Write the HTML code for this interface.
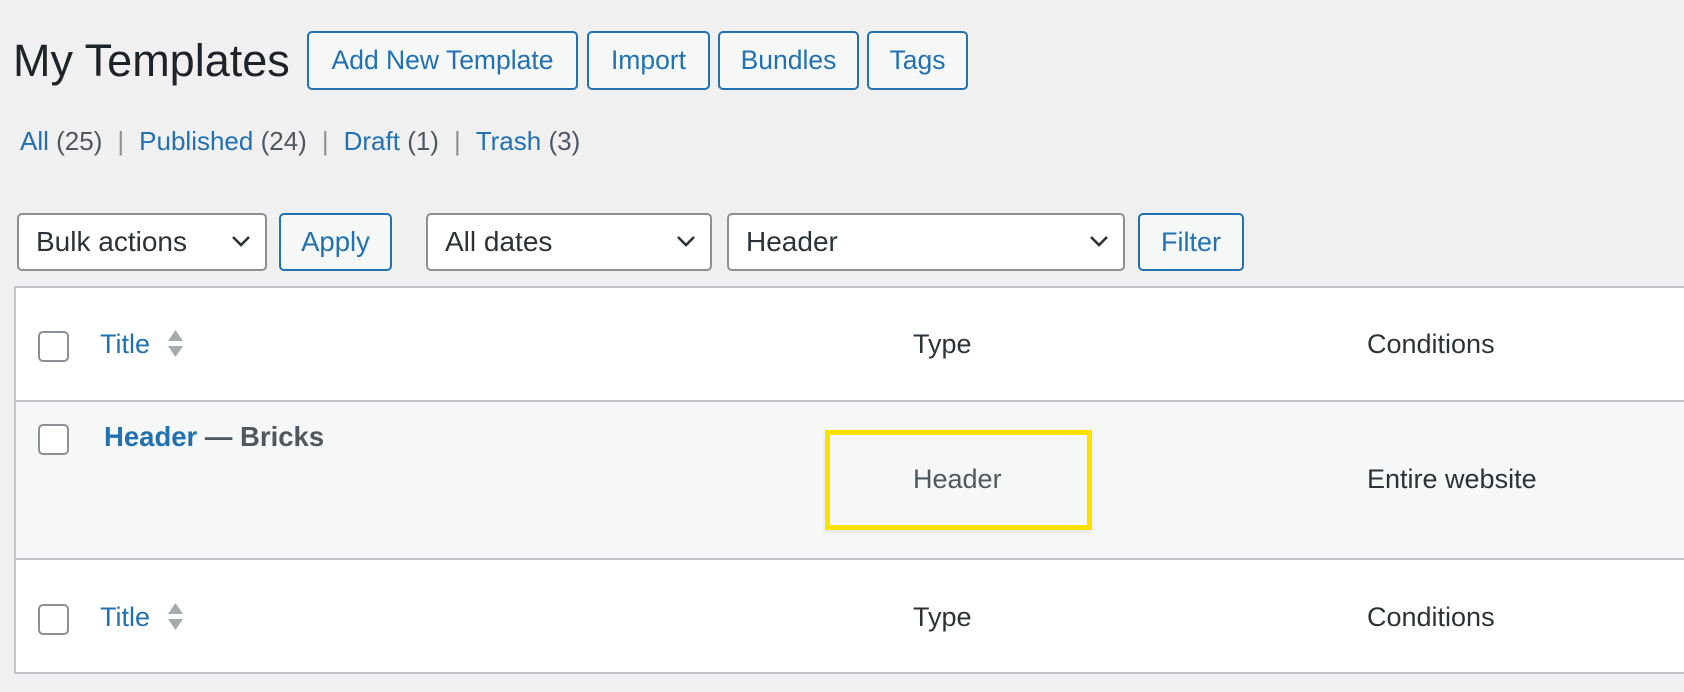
<!DOCTYPE html>
<html><head><meta charset="utf-8"><style>
*{box-sizing:border-box;margin:0;padding:0}
body{width:1684px;height:692px;background:#f0f0f1;font-family:"Liberation Sans",sans-serif;position:relative;overflow:hidden;color:#1d2327}
.a{position:absolute;white-space:nowrap}
.c{position:absolute;white-space:nowrap;height:40px;line-height:40px}
.btn{position:absolute;border:2px solid #2271b1;border-radius:5px;background:#f6f7f7;color:#2271b1;font-size:26.5px;display:flex;align-items:center;justify-content:center}
.sel{position:absolute;border:2px solid #8c8f94;border-radius:5px;background:#fff;color:#2c3338;font-size:28px;display:flex;align-items:center;padding-left:17px}
.sel svg{position:absolute;right:14px;top:50%;margin-top:-7px}
.blue{color:#2271b1}
.gray{color:#50575e}
.cb{position:absolute;width:31px;height:31px;border:2px solid #8c8f94;border-radius:5px;background:#fff}
.txt{font-size:27px;color:#2c3338}
.sep{color:#8c8f94;margin:0 15px}
</style></head><body>
<div class="c" style="left:13px;top:38px;height:46px;line-height:46px;font-size:45px;color:#1d2327">My Templates</div>
<div class="btn" style="left:307px;top:31px;width:271px;height:59px">Add New Template</div>
<div class="btn" style="left:587px;top:31px;width:123px;height:59px">Import</div>
<div class="btn" style="left:718px;top:31px;width:141px;height:59px">Bundles</div>
<div class="btn" style="left:867px;top:31px;width:101px;height:59px">Tags</div>

<div class="c" style="left:20px;top:121px;font-size:26px"><span class="blue">All</span> <span class="gray">(25)</span><span class="sep">|</span><span class="blue">Published</span> <span class="gray">(24)</span><span class="sep">|</span><span class="blue">Draft</span> <span class="gray">(1)</span><span class="sep">|</span><span class="blue">Trash</span> <span class="gray">(3)</span></div>

<div class="sel" style="left:17px;top:213px;width:250px;height:58px">Bulk actions<svg width="20" height="13" viewBox="0 0 20 13"><path d="M2 2l8 8 8-8" stroke="#2c3338" stroke-width="2.6" fill="none"/></svg></div>
<div class="btn" style="left:279px;top:213px;width:113px;height:58px;font-size:27.5px">Apply</div>
<div class="sel" style="left:426px;top:213px;width:286px;height:58px">All dates<svg width="20" height="13" viewBox="0 0 20 13"><path d="M2 2l8 8 8-8" stroke="#2c3338" stroke-width="2.6" fill="none"/></svg></div>
<div class="sel" style="left:727px;top:213px;width:398px;height:58px">Header<svg width="20" height="13" viewBox="0 0 20 13"><path d="M2 2l8 8 8-8" stroke="#2c3338" stroke-width="2.6" fill="none"/></svg></div>
<div class="btn" style="left:1138px;top:213px;width:106px;height:58px;font-size:27px">Filter</div>

<div class="a" style="left:14px;top:286px;width:1680px;height:388px;border:2px solid #c3c4c7;background:#fff"></div>
<div class="a" style="left:16px;top:400px;width:1680px;height:160px;background:#f6f7f7;border-top:2px solid #c3c4c7;border-bottom:2px solid #c3c4c7"></div>

<div class="cb" style="left:38px;top:331px"></div>
<div class="c blue" style="left:100px;top:324px;font-size:27px">Title</div>
<svg class="a" style="left:167px;top:329px" width="17" height="30" viewBox="0 0 17 30"><path d="M8.5 1L16 12H1z M1 17h15L8.5 28z" fill="#a7aaad"/></svg>
<div class="c txt" style="left:913px;top:324px">Type</div>
<div class="c txt" style="left:1367px;top:324px">Conditions</div>

<div class="cb" style="left:38px;top:424px"></div>
<div class="c" style="left:104px;top:417px;font-size:27.5px;font-weight:bold"><span class="blue">Header</span> <span style="color:#50575e">— Bricks</span></div>
<div class="a" style="left:825px;top:430px;width:267px;height:100px;border:5px solid #ffe100;box-shadow:0 2px 4px rgba(0,0,0,.08)"></div>
<div class="c" style="left:913px;top:459px;font-size:27px;color:#50575e">Header</div>
<div class="c txt" style="left:1367px;top:459px">Entire website</div>

<div class="cb" style="left:38px;top:604px"></div>
<div class="c blue" style="left:100px;top:597px;font-size:27px">Title</div>
<svg class="a" style="left:167px;top:602px" width="17" height="30" viewBox="0 0 17 30"><path d="M8.5 1L16 12H1z M1 17h15L8.5 28z" fill="#a7aaad"/></svg>
<div class="c txt" style="left:913px;top:597px">Type</div>
<div class="c txt" style="left:1367px;top:597px">Conditions</div>
</body></html>
